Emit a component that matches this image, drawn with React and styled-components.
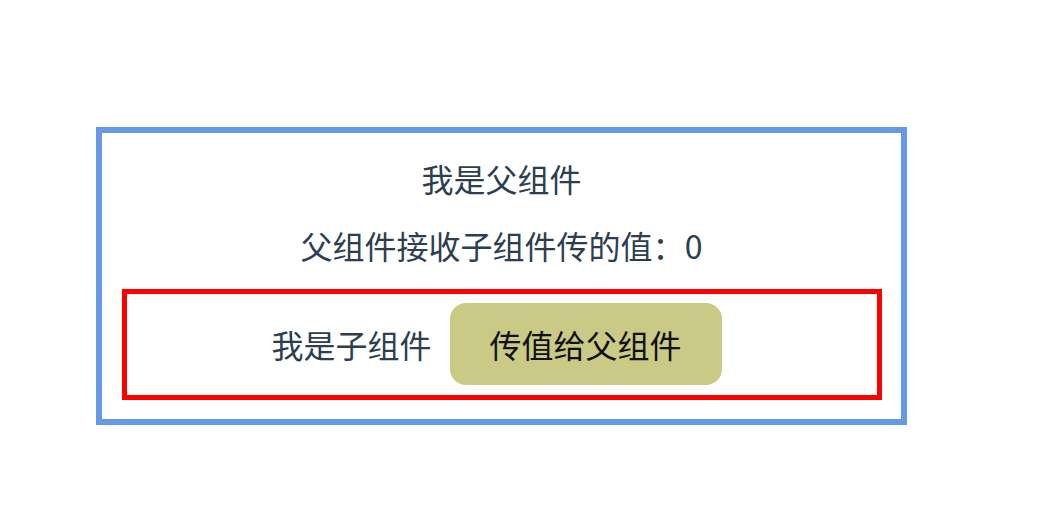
import React, { useState } from 'react'
import styled, { createGlobalStyle } from 'styled-components'

const GlobalStyle = createGlobalStyle`
  body {
    margin: 0;
    background: #fff;
    font-family: "Noto Sans CJK SC", "Noto Sans", sans-serif;
    color: #2c3e50;
  }
`

const Page = styled.div`
  padding: 127px 0 0 96px;
`

const ParentBox = styled.div`
  width: 799px;
  border: 6px solid #6699e8;
  padding-top: 20px;
  text-align: center;
`

const Line = styled.div`
  font-size: 32px;
  line-height: 50px;
  margin-top: ${(p) => p.gap || 0}px;
`

const ChildBox = styled.div`
  margin: 19px 19px 19px 20px;
  border: 5px solid #ff0000;
  padding: 9px 11px 10px 0;
  display: flex;
  align-items: center;
  justify-content: center;
  gap: 18px;
`

const ChildLabel = styled.span`
  font-size: 32px;
  line-height: 50px;
`

const SendButton = styled.button`
  height: 82px;
  padding: 0 40px;
  border: none;
  border-radius: 16px;
  background: #cac986;
  color: #111;
  font-family: inherit;
  font-size: 32px;
  cursor: pointer;
`

function Child({ onSend }) {
  return (
    <ChildBox>
      <ChildLabel>我是子组件</ChildLabel>
      <SendButton onClick={onSend}>传值给父组件</SendButton>
    </ChildBox>
  )
}

export default function App() {
  const [value, setValue] = useState(0)

  return (
    <Page>
      <GlobalStyle />
      <ParentBox>
        <Line>我是父组件</Line>
        <Line gap={17}>父组件接收子组件传的值：{value}</Line>
        <Child onSend={() => setValue(value + 1)} />
      </ParentBox>
    </Page>
  )
}
